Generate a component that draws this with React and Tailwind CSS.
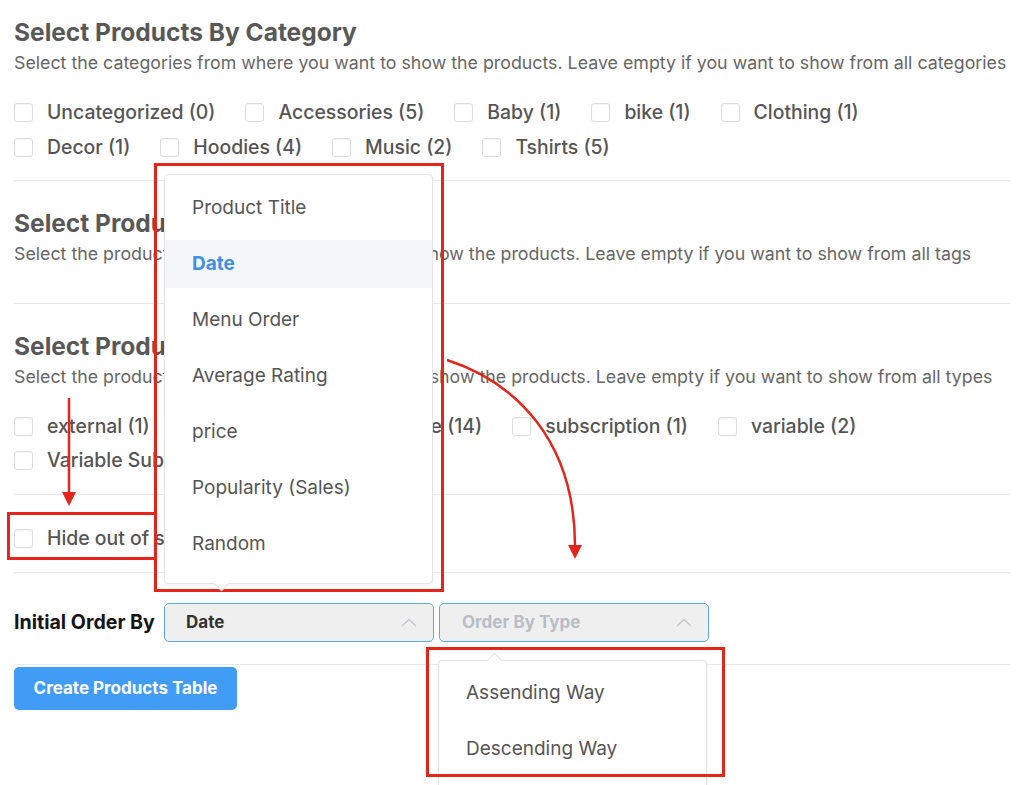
import React from "react";

const catRow1 = ["Uncategorized (0)", "Accessories (5)", "Baby (1)", "bike (1)", "Clothing (1)"];
const catRow2 = ["Decor (1)", "Hoodies (4)", "Music (2)", "Tshirts (5)"];
const typeRow1 = ["external (1)", "grouped (1)", "simple (14)", "subscription (1)", "variable (2)"];
const typeRow2 = ["Variable Subscription (1)"];

const orderOptions = ["Product Title", "Date", "Menu Order", "Average Rating", "price", "Popularity (Sales)", "Random"];

const CheckItem = ({ label }) => (
  <label className="flex items-center gap-[14px] cursor-pointer">
    <span className="w-[19px] h-[19px] rounded-[3px] border border-[#dcdcdc] bg-white shadow-[inset_0_1px_1px_rgba(0,0,0,0.04)] flex-shrink-0" />
    <span className="text-[19.4px] font-medium text-[#555]">{label}</span>
  </label>
);

const CheckRow = ({ items, h = "h-[35px]" }) => (
  <div className={`flex items-center gap-[30px] ${h}`}>
    {items.map((it) => (
      <CheckItem key={it} label={it} />
    ))}
  </div>
);

const Chevron = () => (
  <svg width="16" height="9" viewBox="0 0 16 9" fill="none">
    <polyline points="1,8 8,1.5 15,8" stroke="#c5c7cb" strokeWidth="1.4" />
  </svg>
);

const App = () => {
  return (
    <div className="relative w-[1024px] h-[785px] overflow-hidden bg-white font-['Inter','Liberation_Sans',sans-serif]">
      <div className="px-[14px]">
        {/* Categories */}
        <div className="pt-[16px] pb-[15px] border-b border-[#e9e9e9]">
          <h2 className="text-[24.5px] leading-[32px] font-bold text-[#585858]">Select Products By Category</h2>
          <p className="mt-[3px] text-[17.8px] leading-[24px] text-[#666] whitespace-nowrap">
            Select the categories from where you want to show the products. Leave empty if you want to show from all categories
          </p>
          <div className="mt-[20px]">
            <CheckRow items={catRow1} />
            <CheckRow items={catRow2} />
          </div>
        </div>

        {/* Tags */}
        <div className="pt-[26px] pb-[37px] border-b border-[#e9e9e9]">
          <h2 className="text-[24.5px] leading-[32px] font-bold text-[#585858]">Select Products By Tag</h2>
          <p className="mt-[3px] text-[17.8px] leading-[24px] text-[#666] whitespace-nowrap">
            Select the product tags from where you want to show the products. Leave empty if you want to show from all tags
          </p>
        </div>

        {/* Types */}
        <div className="pt-[26px] pb-[17px] border-b border-[#e9e9e9]">
          <h2 className="text-[24.5px] leading-[32px] font-bold text-[#585858]">Select Products By Type</h2>
          <p className="mt-[3px] text-[17.8px] leading-[24px] text-[#666] whitespace-nowrap">
            Select the product types from where you want to show the products. Leave empty if you want to show from all types
          </p>
          <div className="mt-[20px]">
            <CheckRow items={typeRow1} />
            <CheckRow items={typeRow2} h="h-[33px]" />
          </div>
        </div>

        {/* Stock */}
        <div className="pt-[26px] pb-[16px] border-b border-[#e9e9e9]">
          <div className="relative h-[35px] flex items-center">
            <CheckItem label="Hide out of stock products" />
            <div className="absolute left-[-7px] top-[-9px] w-[150px] h-[48px] border-[3px] border-[#e2261c] pointer-events-none" />
          </div>
        </div>

        {/* Order by */}
        <div className="pt-[30px] pb-[22px] border-b border-[#e9e9e9]">
          <div className="flex items-center">
            <span className="w-[150px] text-[19.6px] font-bold text-[#151515]">Initial Order By</span>

            <div className="relative">
              {/* open list */}
              <div className="absolute left-0 bottom-full mb-[19px] z-10 w-[269px]">
                <div className="absolute left-[-10px] right-[-11px] top-[-11px] bottom-[-8px] border-[3px] border-[#e2261c]" />
                <div className="relative bg-white border border-[#e4e4e4] rounded-[4px] shadow-[0_1px_3px_rgba(0,0,0,0.06)] pt-[9px] pb-[15px] flex flex-col gap-[8px]">
                  {orderOptions.map((o) => (
                    <div
                      key={o}
                      className={`h-[48px] flex items-center px-[27px] text-[19px] ${
                        o === "Date" ? "bg-[#f4f6f9] text-[#3f8fe6] font-bold" : "text-[#555]"
                      }`}
                    >
                      {o}
                    </div>
                  ))}
                  <span className="absolute left-[51px] bottom-[-6px] w-[11px] h-[11px] rotate-45 bg-white border-r border-b border-[#e4e4e4]" />
                </div>
              </div>

              <div className="w-[270px] h-[39px] rounded-[5px] border-[1.5px] border-[#5fa7e4] bg-[#efeff0] pl-[21px] pr-[16px] flex items-center justify-between">
                <span className="text-[17px] font-bold text-[#333]">Date</span>
                <Chevron />
              </div>
            </div>

            <div className="relative ml-[5px]">
              <div className="w-[270px] h-[39px] rounded-[5px] border-[1.5px] border-[#5fa7e4] bg-[#efeff0] pl-[22px] pr-[16px] flex items-center justify-between">
                <span className="text-[17px] font-bold text-[#b9bdc4]">Order By Type</span>
                <Chevron />
              </div>

              {/* open list */}
              <div className="absolute left-[-13px] top-full mt-[5px] w-[299px] h-[130px] border-[3px] border-[#e2261c] z-20 pointer-events-none" />
              <div className="absolute left-[-1px] top-full mt-[18px] z-10 w-[269px] h-[160px] bg-white border border-[#e4e4e4] rounded-[4px] shadow-[0_1px_3px_rgba(0,0,0,0.06)] pt-[8px] flex flex-col gap-[8px]">
                <span className="absolute left-[50px] top-[-6px] w-[11px] h-[11px] rotate-45 bg-white border-l border-t border-[#e4e4e4]" />
                {["Assending Way", "Descending Way"].map((o) => (
                  <div key={o} className="relative h-[48px] flex items-center px-[27px] text-[19px] text-[#555]">
                    {o}
                  </div>
                ))}
              </div>
            </div>
          </div>
        </div>

        <button className="mt-[2px] w-[223px] h-[43px] rounded-[5px] bg-[#409cf5] text-white text-[17px] font-bold">
          Create Products Table
        </button>
      </div>

      {/* annotation arrows */}
      <svg className="absolute inset-0 pointer-events-none z-30" width="1024" height="785" viewBox="0 0 1024 785">
        <line x1="69" y1="398" x2="69" y2="494" stroke="#e2261c" strokeWidth="2.5" />
        <polygon points="62,492 76,492 69,506" fill="#e2261c" />
        <path d="M447,360 C515,382 575,440 575,546" fill="none" stroke="#e2261c" strokeWidth="2.5" />
        <polygon points="568,545 582,545 575,559" fill="#e2261c" />
      </svg>
    </div>
  );
};

export default App;
